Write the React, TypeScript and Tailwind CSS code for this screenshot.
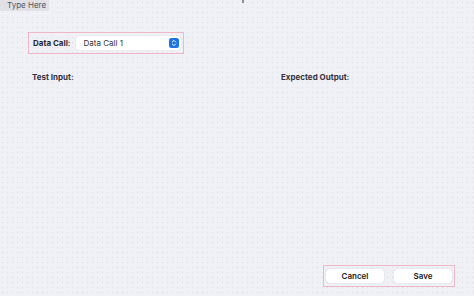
import { ChevronsUpDown } from "lucide-react"

export default function App() {
  return (
    <div
      className="relative w-[474px] h-[296px] overflow-hidden bg-[#f0f0f7] bg-[radial-gradient(#dedee8_0.8px,transparent_0.8px)] bg-[size:5px_5px] text-[#2a2a33]"
      style={{ fontFamily: "Inter, 'Liberation Sans', sans-serif" }}
    >
      {/* tab */}
      <div className="flex">
        <div className="bg-[#e0e0e6] text-[#55555e] text-[8px] leading-[11px] pl-[7px] pr-[3px] rounded-br-[2px]">Type Here</div>
      </div>
      <div className="absolute left-[242px] top-0 w-[2px] h-[3px] bg-[#8a8aa0]" />

      <div className="flex flex-col px-[28px] pt-[21px]">
        {/* data call row */}
        <div className="flex">
          <div className="flex items-center gap-[5px] border border-[#f0b8c4] h-[22px] pl-[4px] pr-[2px]">
            <span className="text-[8px] font-bold">Data Call:</span>
            <div className="flex items-center justify-between w-[105px] h-[14px] bg-white rounded-[3px] shadow-[0_0_1px_rgba(0,0,0,0.2)] pl-[8px] pr-[2px]">
              <span className="text-[8px] text-[#333]">Data Call 1</span>
              <div className="w-[10px] h-[10px] rounded-[2.5px] bg-[#1a73e8] flex items-center justify-center">
                <ChevronsUpDown className="w-[8px] h-[8px] text-white" strokeWidth={3} />
              </div>
            </div>
          </div>
        </div>

        {/* io labels */}
        <div className="flex mt-[17px] pl-[4px]">
          <span className="w-[249px] text-[8px] font-bold text-[#333340]">Test Input:</span>
          <span className="text-[8px] font-bold text-[#333340]">Expected Output:</span>
        </div>
      </div>

      {/* footer buttons */}
      <div className="absolute right-[19px] bottom-[9px] flex gap-[10px] border border-[#f0b8c4] px-[2px] py-[3px]">
        <button className="w-[58px] h-[14px] bg-white rounded-[3px] shadow-[0_0_1px_rgba(0,0,0,0.3)] text-[8px] font-semibold text-[#222]">Cancel</button>
        <button className="w-[58px] h-[14px] bg-white rounded-[3px] shadow-[0_0_1px_rgba(0,0,0,0.3)] text-[8px] font-semibold text-[#222]">Save</button>
      </div>
    </div>
  )
}
